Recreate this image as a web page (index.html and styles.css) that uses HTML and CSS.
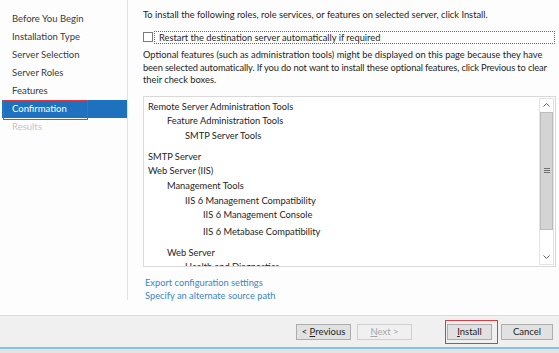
FILE: index.html
```html
<!DOCTYPE html>
<html>
<head>
<meta charset="utf-8">
<link rel="stylesheet" href="styles.css">
</head>
<body>
<div class="wizard">
  <div class="main">
    <nav class="nav">
      <div class="nav-item">Before You Begin</div>
      <div class="nav-item">Installation Type</div>
      <div class="nav-item">Server Selection</div>
      <div class="nav-item">Server Roles</div>
      <div class="nav-item">Features</div>
      <div class="nav-item active">Confirmation</div>
      <div class="nav-item disabled">Results</div>
    </nav>
    <section class="content">
      <p class="intro">To install the following roles, role services, or features on selected server, click Install.</p>
      <label class="restart">
        <span class="checkbox"></span>
        <span class="restart-text">Restart the destination server automatically if required</span>
      </label>
      <p class="optional">Optional features (such as administration tools) might be displayed on this page because they have<br><span class="tight">been selected automatically. If you do not want to install these optional features, click Previous to clear</span><br>their check boxes.</p>
      <div class="listbox">
        <div class="items">
          <div class="item l0">Remote Server Administration Tools</div>
          <div class="item l1">Feature Administration Tools</div>
          <div class="item l2">SMTP Server Tools</div>
          <div class="item l0 gap">SMTP Server</div>
          <div class="item l0">Web Server (IIS)</div>
          <div class="item l1">Management Tools</div>
          <div class="item l2">IIS 6 Management Compatibility</div>
          <div class="item l3">IIS 6 Management Console</div>
          <div class="item l3 gap-sm">IIS 6 Metabase Compatibility</div>
          <div class="item l1 gap">Web Server</div>
          <div class="item l2 cut">Health and Diagnostics</div>
        </div>
        <div class="scrollbar">
          <div class="arrow">
            <svg width="7" height="4" viewBox="0 0 7 4"><path d="M0.5 3.5 L3.5 0.5 L6.5 3.5" fill="none" stroke="#606060" stroke-width="1"/></svg>
          </div>
          <div class="thumb"><span class="grip"></span></div>
          <div class="track"></div>
          <div class="arrow">
            <svg width="7" height="4" viewBox="0 0 7 4"><path d="M0.5 0.5 L3.5 3.5 L6.5 0.5" fill="none" stroke="#606060" stroke-width="1"/></svg>
          </div>
        </div>
      </div>
      <div class="links">
        <a class="link">Export configuration settings</a>
        <a class="link">Specify an alternate source path</a>
      </div>
    </section>
  </div>
  <footer class="footer">
    <button class="btn">&lt; <u>P</u>revious</button>
    <button class="btn disabled"><u>N</u>ext &gt;</button>
    <span class="install-wrap"><button class="btn install"><u>I</u>nstall</button></span>
    <button class="btn cancel">Cancel</button>
  </footer>
  <div class="accent"></div>
</div>
</body>
</html>
```

FILE: styles.css
```css
* { box-sizing: border-box; }
html, body { margin: 0; padding: 0; }
body {
  width: 559px;
  height: 353px;
  overflow: hidden;
  background: #fdfdfd;
  font-family: Lato, "Open Sans", sans-serif;
  font-size: 9.3px;
  color: #1e1e1e;
}
.wizard { display: flex; flex-direction: column; height: 353px; }
.main { display: flex; height: 315px; }
.nav {
  flex: 0 0 128px;
  width: 128px;
  height: 300px;
  border-right: 1px solid #e2e2e2;
  padding-top: 10px;
  padding-left: 2px;
}
.nav-item {
  height: 18px;
  line-height: 18px;
  padding-left: 10px;
  color: #3a3a3a;
  white-space: nowrap;
  font-size: 9.5px;
}
.nav-item.active {
  background: #1e71bf;
  color: #fff;
  position: relative;
}
.nav-item.active::after {
  content: "";
  position: absolute;
  left: 1px;
  top: 0;
  width: 83px;
  height: 18px;
  border: 1.5px solid #e2363c;
}
.nav-item.disabled { color: #c4c4c4; }
.content { flex: 1; min-width: 0; padding-left: 15px; padding-right: 4px; }
.intro { margin: 8px 0 0 0; line-height: 13px; white-space: nowrap; }
.restart {
  display: flex;
  align-items: center;
  margin-top: 10px;
  height: 12px;
}
.checkbox {
  width: 10px; height: 10px;
  border: 1px solid #7a7a7a;
  background: #fff;
  margin-right: 1px;
}
.restart-text {
  flex: 1;
  border: 1px dotted #6a6a6a;
  padding-left: 4px;
  line-height: 11px;
  height: 13px;
  white-space: nowrap;
}
.optional { margin: 6px 0 0 0; line-height: 12.5px; white-space: nowrap; }
.tight { letter-spacing: -0.13px; }
.listbox {
  margin-top: 9px;
  width: 413px;
  height: 171px;
  border: 1px solid #d9d9d9;
  background: #fff;
  display: flex;
  overflow: hidden;
}
.items { flex: 1; padding-top: 3px; padding-left: 4px; overflow: hidden; }
.item { height: 14.7px; line-height: 14.7px; white-space: nowrap; }
.item.cut { height: 6px; overflow: hidden; }
.l1 { padding-left: 19px; }
.l2 { padding-left: 37px; }
.l3 { padding-left: 55px; }
.gap { margin-top: 6px; }
.gap-sm { margin-top: 2px; }
.scrollbar {
  width: 15px;
  margin: 1px 1px 1px 0;
  border: 1px solid #e4e4e4;
  display: flex;
  flex-direction: column;
  background: #fff;
}
.arrow {
  height: 13px;
  display: flex;
  align-items: center;
  justify-content: center;
}
.thumb {
  height: 118px;
  background: #d4d4d4;
  border: 1px solid #bcbcbc;
  display: flex;
  align-items: center;
  justify-content: center;
}
.grip {
  width: 6px; height: 5px;
  background: repeating-linear-gradient(#6f6f6f 0 1px, transparent 1px 2px);
}
.track { flex: 1; }
.links { margin-top: 9px; padding-left: 2px; display: flex; flex-direction: column; }
.link { color: #3b86c6; line-height: 13px; text-decoration: none; }
.footer {
  height: 32px;
  background: #f0f0f0;
  border-top: 1px solid #dcdcdc;
  display: flex;
  align-items: center;
  padding-left: 296px;
}
.btn {
  font-family: inherit;
  font-size: 9.5px;
  width: 56px;
  height: 16px;
  padding: 0;
  line-height: 14px;
  background: #e1e1e1;
  border: 1px solid #adadad;
  color: #1e1e1e;
  margin-right: 6px;
}
.btn.disabled { background: #f0f0f0; border-color: #cfcfcf; color: #a6a6a6; }
.install-wrap {
  margin-left: 27px;
  border: 1px solid #e23a3f;
  padding: 3px 5px 3px 1px;
  display: flex;
}
.btn.install { width: 45px; margin-right: 0; }
.cancel { width: 53px; margin-left: 3px; }
.accent {
  height: 2px;
  background: #84c3e6;
}
.wizard::after {
  content: "";
  display: block;
  flex: 1;
  background: #e3e3e3;
}
```
